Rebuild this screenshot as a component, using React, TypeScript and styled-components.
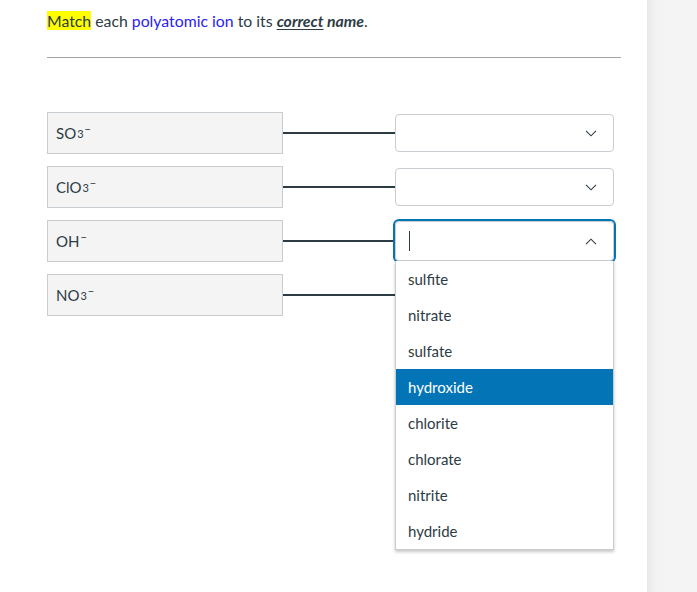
import React from 'react'
import styled, { createGlobalStyle } from 'styled-components'

const GlobalStyle = createGlobalStyle`
    html, body {
        margin: 0;
        padding: 0;
        background: #ffffff;
        font-family: Lato, "Open Sans", sans-serif;
        color: #2d3b45;
    }
`

const Page = styled.div`
    display: flex;
    min-height: 100vh;
`

const Main = styled.main`
    width: 647px;
    box-sizing: border-box;
    padding: 10px 26px 0 47px;
`

const SidePanel = styled.aside`
    flex: 1;
    background: linear-gradient(to right, #e9e9e9 0px, #f3f3f3 10px, #f4f4f4 100%);
`

const Prompt = styled.p`
    margin: 0;
    font-size: 15.8px;
    line-height: 21px;
    color: #2d3b45;

    mark {
        background: #ffff00;
        color: #2d3b45;
    }
    .term {
        color: #2a22f0;
    }
    strong {
        font-style: italic;
    }
    u {
        text-underline-offset: 2px;
    }
`

const Divider = styled.hr`
    margin: 26px 0 0;
    border: 0;
    height: 1px;
    background: #a3a3a3;
`

const Rows = styled.div`
    margin-top: 54px;
    display: grid;
    gap: 12px;
`

const Row = styled.div`
    display: flex;
    align-items: center;
    height: 42px;
`

const Term = styled.div`
    width: 236px;
    height: 42px;
    box-sizing: border-box;
    display: flex;
    align-items: center;
    padding-left: 8px;
    background: #f4f4f4;
    border: 1px solid #c7cdd1;
    font-size: 15px;
`

const Index = styled.span`
    font-size: 11px;
    margin-left: 1px;
`

const Charge = styled.span`
    font-size: 11px;
    position: relative;
    top: -5px;
    margin-left: 1px;
`

const Connector = styled.div`
    width: 112px;
    height: 2px;
    background: #2d3b45;
`

const Select = styled.div<{ $open?: boolean }>`
    position: relative;
    width: 219px;
    height: ${p => (p.$open ? '40px' : '38px')};
    box-sizing: border-box;
    display: flex;
    align-items: center;
    justify-content: space-between;
    padding: 0 16px 0 13px;
    background: #ffffff;
    border: 1px solid #c7cdd1;
    border-radius: 4px;
    outline: ${p => (p.$open ? '2px solid #0374b5' : 'none')};
`

const Caret = styled.span`
    width: 1px;
    height: 20px;
    background: #2d3b45;
`

const Chevron = styled.svg`
    margin-left: auto;
    margin-top: 1px;
`

const Menu = styled.ul`
    position: absolute;
    top: 100%;
    left: -1px;
    width: 217px;
    margin: 1px 0 0;
    padding: 0;
    list-style: none;
    background: #ffffff;
    border: 1px solid #c7cdd1;
    border-top: 0;
    box-shadow: 0 2px 3px rgba(0, 0, 0, 0.22);
    z-index: 2;
`

const Option = styled.li<{ $active?: boolean }>`
    height: 36px;
    display: flex;
    align-items: center;
    padding-left: 12px;
    font-size: 15px;
    color: ${p => (p.$active ? '#ffffff' : '#2d3b45')};
    background: ${p => (p.$active ? '#0374b5' : '#ffffff')};
`

const options = ['sulfite', 'nitrate', 'sulfate', 'hydroxide', 'chlorite', 'chlorate', 'nitrite', 'hydride']

const ions = [
    { base: 'SO', index: '3' },
    { base: 'ClO', index: '3' },
    { base: 'OH', open: true },
    { base: 'NO', index: '3' },
]

function ChevronIcon({ up }: { up?: boolean }) {
    return (
        <Chevron width="12" height="7" viewBox="0 0 12 7">
            <path
                d={up ? 'M1 6.2L6 1.2l5 5' : 'M1 0.8l5 5 5-5'}
                fill="none"
                stroke="#2d3b45"
                strokeWidth="1.1"
            />
        </Chevron>
    )
}

export default function App() {
    return (
        <Page>
            <GlobalStyle />
            <Main>
                <Prompt>
                    <mark>Match</mark> each <span className="term">polyatomic ion</span> to its{' '}
                    <strong><u>correct</u> name</strong>.
                </Prompt>
                <Divider />
                <Rows>
                    {ions.map((ion, i) => (
                        <Row key={i}>
                            <Term>
                                {ion.base}
                                {ion.index && <Index>{ion.index}</Index>}
                                <Charge>−</Charge>
                            </Term>
                            <Connector />
                            <Select $open={ion.open}>
                                {ion.open && <Caret />}
                                <ChevronIcon up={ion.open} />
                                {ion.open && (
                                    <Menu>
                                        {options.map(o => (
                                            <Option key={o} $active={o === 'hydroxide'}>{o}</Option>
                                        ))}
                                    </Menu>
                                )}
                            </Select>
                        </Row>
                    ))}
                </Rows>
            </Main>
            <SidePanel />
        </Page>
    )
}
